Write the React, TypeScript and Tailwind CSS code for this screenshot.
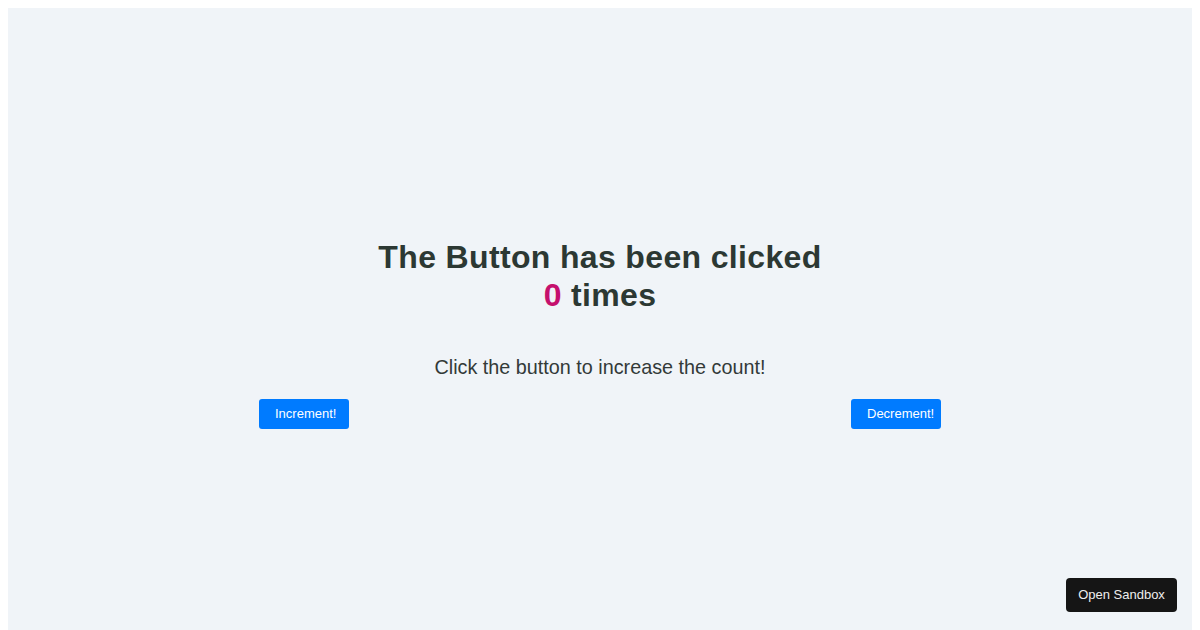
import { useState } from 'react';

export default function App() {
  const [count, setCount] = useState(0);

  return (
    <div className="bg-white p-2 min-h-screen" style={{ fontFamily: '"Liberation Sans", Arial, sans-serif' }}>
      <div className="bg-[#f0f4f8] min-h-[640px] pt-[230px] flex flex-col items-center">
        <h1 className="text-[32px] leading-[38px] font-bold tracking-[0.35px] text-[#2c3833] text-center">
          The Button has been clicked
          <br />
          <span className="text-[#c5106d]">{count}</span> times
        </h1>
        <p className="mt-[41px] text-[19.8px] leading-[24px] text-[#333a38]">Click the button to increase the count!</p>
        <div className="mt-[20px] w-[682px] flex justify-between">
          <button
            onClick={() => setCount(count + 1)}
            className="h-[30px] w-[90px] pl-[16px] text-left bg-[#007bff] text-white text-[13px] rounded-[3px]"
          >
            Increment!
          </button>
          <button
            onClick={() => setCount(count - 1)}
            className="h-[30px] w-[90px] pl-[16px] text-left bg-[#007bff] text-white text-[13px] rounded-[3px]"
          >
            Decrement!
          </button>
        </div>
      </div>
      <button className="fixed right-[23px] bottom-[18px] h-[34px] w-[111px] bg-[#151515] text-[#eeeeee] text-[13px] rounded-[4px]">
        Open Sandbox
      </button>
    </div>
  );
}
